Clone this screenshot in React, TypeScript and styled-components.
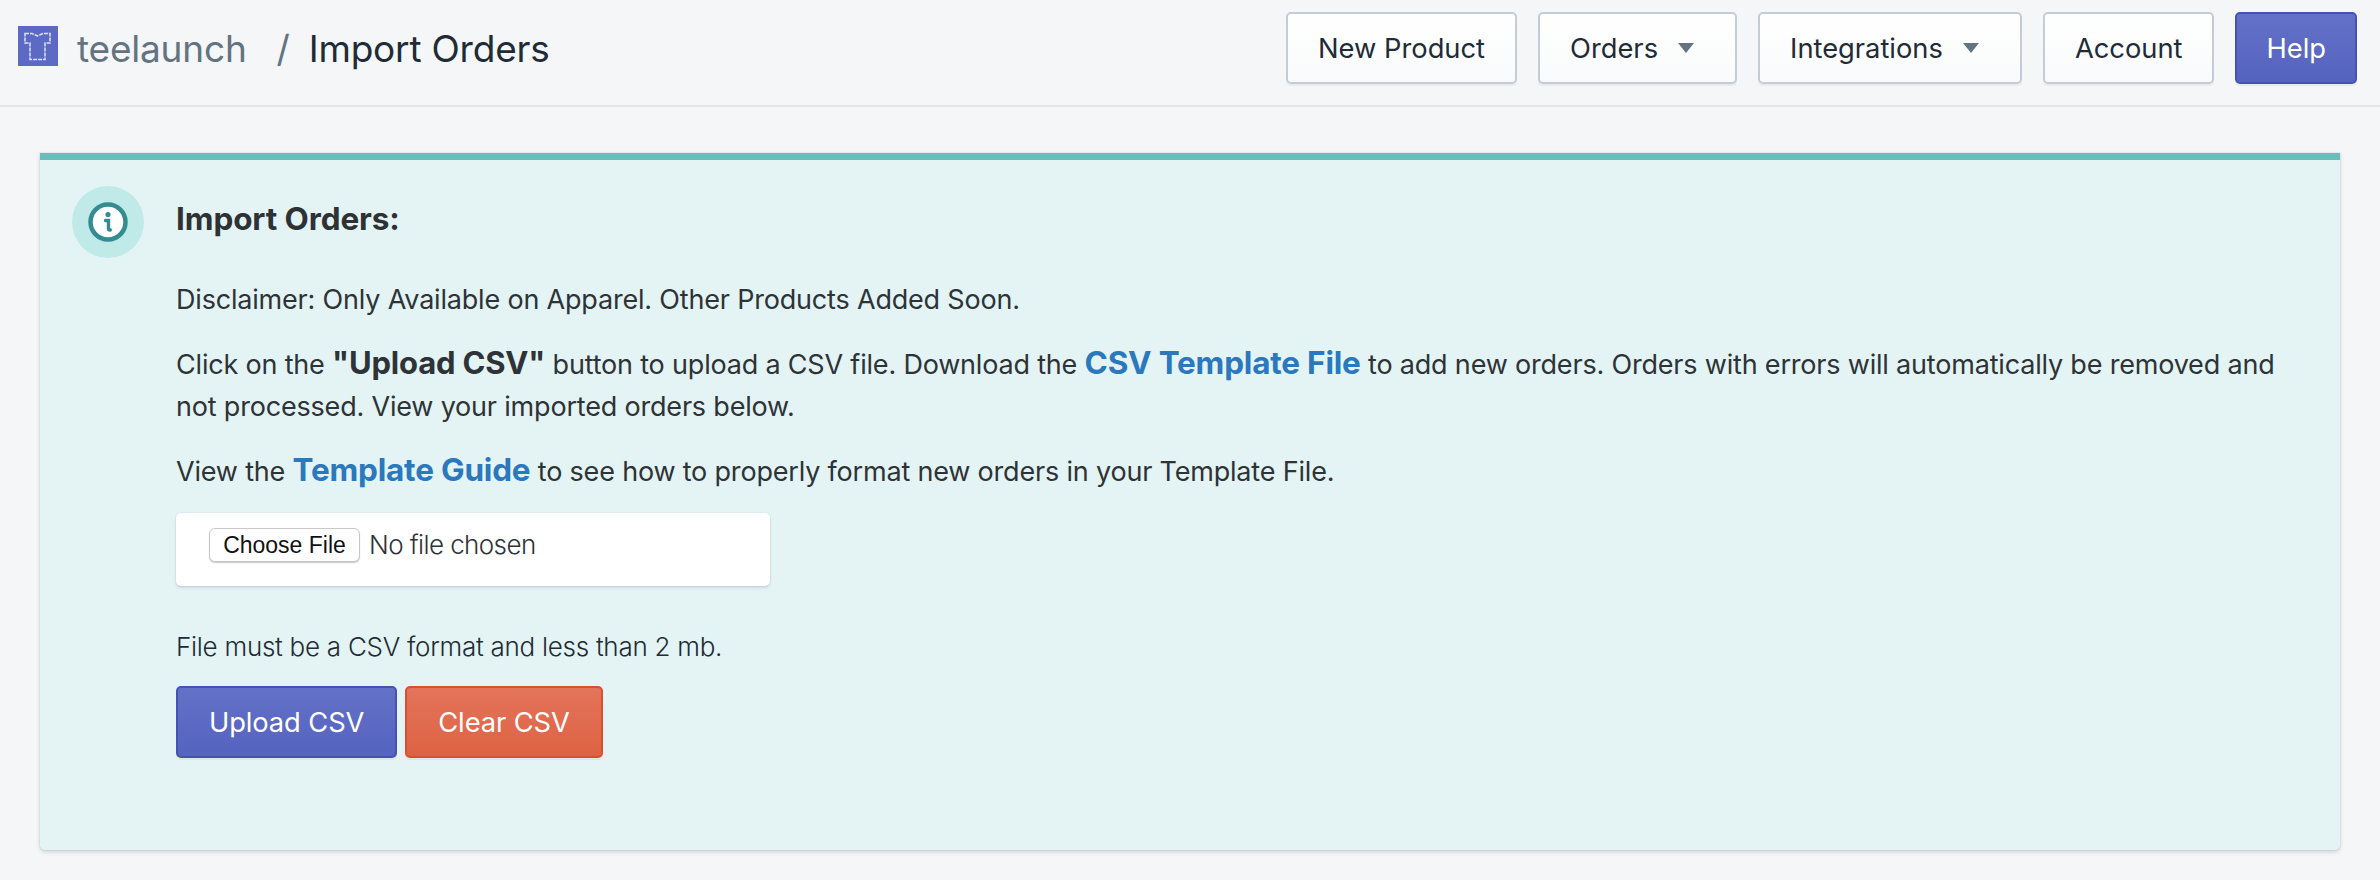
import styled, { createGlobalStyle } from 'styled-components';

const GlobalStyle = createGlobalStyle`
  html, body {
    margin: 0;
    padding: 0;
    background: #f4f6f8;
  }
  body {
    font-family: Inter, "Liberation Sans", sans-serif;
    color: #212b36;
  }
`;

const Page = styled.div`
  width: 2380px;
  height: 880px;
  overflow: hidden;
`;

const TopBar = styled.header`
  height: 93px;
  display: flex;
  align-items: flex-start;
  justify-content: space-between;
  padding: 12px 23px 0 18px;
  border-bottom: 2px solid #e3e5e8;
`;

const Crumbs = styled.div`
  display: flex;
  align-items: center;
  height: 72px;
  font-size: 37px;
  letter-spacing: -0.2px;
`;

const Logo = styled.svg`
  width: 40px;
  height: 40px;
  margin: 0 19px 0 0;
  position: relative;
  top: -2px;
  flex: none;
`;

const Brand = styled.span`
  color: #637381;
`;

const Slash = styled.span`
  color: #637381;
  margin: 0 19px 0 30px;
`;

const Nav = styled.nav`
  display: flex;
  gap: 21px;
`;

const Button = styled.button<{ $tone?: 'plain' | 'indigo' | 'red' }>`
  box-sizing: border-box;
  height: 72px;
  padding: 0 30px;
  font-family: inherit;
  font-size: 27.3px;
  border-radius: 5px;
  display: inline-flex;
  align-items: center;
  justify-content: center;
  border: 2px solid
    ${(p) => (p.$tone === 'indigo' ? '#4452b0' : p.$tone === 'red' ? '#d9502f' : '#c4cdd5')};
  color: ${(p) => (p.$tone === 'indigo' || p.$tone === 'red' ? '#fff' : '#212b36')};
  background: ${(p) =>
    p.$tone === 'indigo'
      ? 'linear-gradient(180deg, #6371c7, #5563c1)'
      : p.$tone === 'red'
      ? 'linear-gradient(180deg, #e4745a, #de6244)'
      : 'linear-gradient(180deg, #fff, #f9fafb)'};
  box-shadow: 0 2px 0 rgba(22, 29, 37, 0.05);
`;

const HelpButton = styled(Button)`
  padding: 0 29px;
`;

const ActionButton = styled(Button)`
  padding: 0 31px;
  letter-spacing: -0.1px;
`;

const Caret = styled.span`
  width: 0;
  height: 0;
  margin: 0 11px 0 20px;
  border-left: 8px solid transparent;
  border-right: 8px solid transparent;
  border-top: 10px solid #637381;
`;

const Content = styled.main`
  padding: 46px 40px 0;
`;

const Banner = styled.section`
  box-sizing: border-box;
  height: 697px;
  display: flex;
  background: #e4f4f4;
  border-top: 7px solid #69bebb;
  border-radius: 0 0 5px 5px;
  box-shadow: 0 0 0 1px rgba(63, 63, 68, 0.05), 0 2px 4px rgba(63, 63, 68, 0.2);
  padding: 26px 0 0 32px;
`;

const IconHalo = styled.div`
  width: 72px;
  height: 72px;
  border-radius: 50%;
  background: #c0eae8;
  display: flex;
  align-items: center;
  justify-content: center;
  flex: none;
  margin-right: 32px;
`;

const BannerBody = styled.div`
  width: 2130px;
  font-size: 27px;
  letter-spacing: -0.19px;
  color: #2e3338;
`;

const Title = styled.h2`
  margin: 0 0 27px;
  font-size: 31.5px;
  line-height: 66px;
  font-weight: 700;
  letter-spacing: -0.1px;
  color: #2f3235;
`;

const Notes = styled.div`
  display: flex;
  flex-direction: column;
  gap: 23px;
  margin-bottom: 20px;
`;

const Para = styled.p`
  margin: 0;
  line-height: 42px;
`;

const Strong = styled.b`
  font-size: 31px;
  line-height: 1;
  font-weight: 700;
`;

const TextLink = styled.a`
  font-size: 31.5px;
  line-height: 1;
  font-weight: 700;
  letter-spacing: -0.2px;
  color: #2c78bd;
`;

const FileBox = styled.div`
  box-sizing: border-box;
  width: 594px;
  height: 73px;
  background: #fff;
  border-radius: 5px;
  box-shadow: 0 0 0 1px rgba(63, 63, 68, 0.04), 0 2px 3px rgba(63, 63, 68, 0.14);
  display: flex;
  align-items: flex-start;
  padding: 15px 0 0 33px;
`;

const ChooseButton = styled.button`
  box-sizing: border-box;
  width: 151px;
  height: 34px;
  padding: 1px 0 0;
  font-family: "Liberation Sans", Arial, sans-serif;
  font-size: 23px;
  color: #111;
  background: #fff;
  border: 1px solid #c8c8c8;
  border-radius: 6px;
  box-shadow: 0 1px 1px rgba(0, 0, 0, 0.22);
`;

const FileName = styled.span`
  margin: 1px 0 0 9px;
  font-size: 26px;
  font-weight: 300;
  letter-spacing: -0.6px;
  line-height: 32px;
  color: #2e3338;
`;

const Hint = styled.p`
  margin: 40px 0 18px;
  font-size: 26px;
  font-weight: 300;
  letter-spacing: -0.27px;
  line-height: 42px;
  color: #212b36;
`;

const Actions = styled.div`
  display: flex;
  gap: 8px;
`;

function App() {
  return (
    <Page>
      <GlobalStyle />
      <TopBar>
        <Crumbs>
          <Logo viewBox="0 0 40 40">
            <rect width="40" height="40" fill="#5c6ac4" />
            <path
              d="M7 7.500h7l5.500 2.500 5.500-2.500h7V17h-5v16.500H12V17H7z"
              fill="none"
              stroke="#dfe3f5"
              strokeWidth="1.500"
              strokeDasharray="4 1"
            />
          </Logo>
          <Brand>teelaunch</Brand>
          <Slash>/</Slash>
          <span>Import Orders</span>
        </Crumbs>
        <Nav>
          <Button>New Product</Button>
          <Button>
            Orders
            <Caret />
          </Button>
          <Button>
            Integrations
            <Caret />
          </Button>
          <Button>Account</Button>
          <HelpButton $tone="indigo">Help</HelpButton>
        </Nav>
      </TopBar>
      <Content>
        <Banner>
          <IconHalo>
            <svg width="40" height="40" viewBox="0 0 40 40">
              <circle cx="20" cy="20" r="17.500" fill="#fff" stroke="#348b90" strokeWidth="4.500" />
              <circle cx="20" cy="12.500" r="2.600" fill="#348b90" />
              <path
                d="M17.500 18.500h3v8.500c0 .8.600 1.200 1.800 1"
                fill="none"
                stroke="#348b90"
                strokeWidth="3.400"
                strokeLinecap="round"
              />
            </svg>
          </IconHalo>
          <BannerBody>
            <Title>Import Orders:</Title>
            <Notes>
              <Para>Disclaimer: Only Available on Apparel. Other Products Added Soon.</Para>
              <Para>
                Click on the <Strong>"Upload CSV"</Strong> button to upload a CSV file. Download the{' '}
                <TextLink>CSV Template File</TextLink> to add new orders. Orders with errors will
                automatically be removed and
                <br />
                not processed. View your imported orders below.
              </Para>
              <Para>
                View the <TextLink>Template Guide</TextLink> to see how to properly format new
                orders in your Template File.
              </Para>
            </Notes>
            <FileBox>
              <ChooseButton>Choose File</ChooseButton>
              <FileName>No file chosen</FileName>
            </FileBox>
            <Hint>File must be a CSV format and less than 2 mb.</Hint>
            <Actions>
              <ActionButton $tone="indigo">Upload CSV</ActionButton>
              <ActionButton $tone="red">Clear CSV</ActionButton>
            </Actions>
          </BannerBody>
        </Banner>
      </Content>
    </Page>
  );
}

export default App;
